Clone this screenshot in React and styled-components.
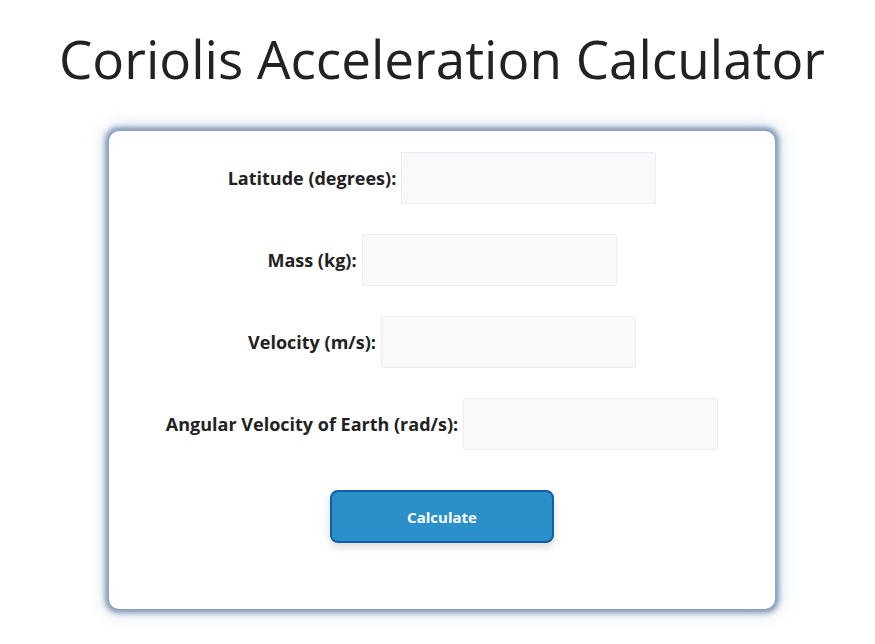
import React from 'react';
import styled, { createGlobalStyle } from 'styled-components';

const GlobalStyle = createGlobalStyle`
    body {
        margin: 0;
        background: #fff;
        font-family: "Open Sans", "Noto Sans", sans-serif;
        color: #222;
    }
`

const Page = styled.div`
    min-height: 644px;
    box-sizing: border-box;
    display: flex;
    flex-direction: column;
    align-items: center;
    padding: 22px 0 0 9px;
`
const Title = styled.h1`
    margin: 0 0 36px;
    font-size: 53px;
    font-weight: 400;
    color: #222;
`
const Card = styled.div`
    width: 666px;
    height: 478px;
    box-sizing: border-box;
    background: #fff;
    border-radius: 10px;
    box-shadow: 0 0 5px 4px rgba(110, 135, 170, 0.8), 0 0 16px 6px rgba(150, 175, 205, 0.35);
    display: flex;
    flex-direction: column;
    align-items: center;
    padding-top: 21px;
`
const Row = styled.div`
    display: flex;
    align-items: center;
    justify-content: center;
    gap: 5px;
    margin-bottom: 30px;
`
const Label = styled.label`
    font-size: 18px;
    font-weight: 700;
    color: #222;
`
const Input = styled.input`
    width: 255px;
    height: 52px;
    box-sizing: border-box;
    background: #f8f9fa;
    border: 1px solid #eceef0;
    border-radius: 2px;
    outline: none;
`
const Button = styled.button`
    margin-top: 10px;
    width: 224px;
    height: 53px;
    background: #2b8fca;
    border: 2px solid #0f5fa6;
    border-radius: 8px;
    color: #fff;
    font-family: "Open Sans", "Noto Sans", sans-serif;
    font-size: 15px;
    font-weight: 700;
    box-shadow: 0 4px 8px rgba(0, 0, 0, 0.15);
`

const fields = [
    'Latitude (degrees):',
    'Mass (kg):',
    'Velocity (m/s):',
    'Angular Velocity of Earth (rad/s):',
];

const App = () => {
    return (
        <Page>
            <GlobalStyle />
            <Title>Coriolis Acceleration Calculator</Title>
            <Card>
                {fields.map((f) => (
                    <Row key={f}>
                        <Label>{f}</Label>
                        <Input type="text" />
                    </Row>
                ))}
                <Button>Calculate</Button>
            </Card>
        </Page>
    );
};

export default App;
